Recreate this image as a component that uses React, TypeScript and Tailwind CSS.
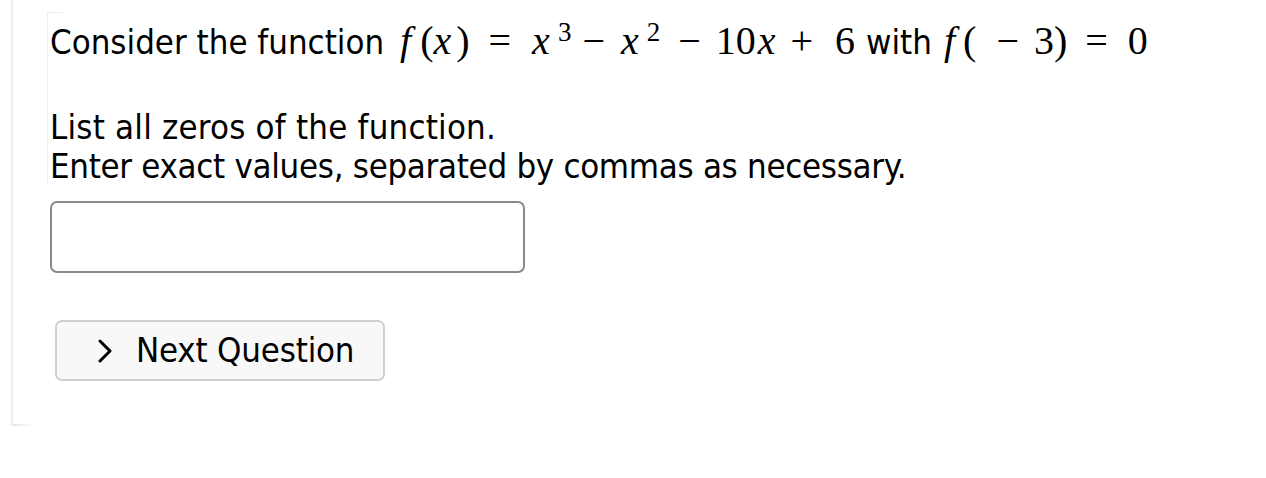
function Equation() {
  return (
    <span className="flex items-baseline font-['Liberation_Serif',serif] text-[40px]">
      <i>f</i>
      <span className="ml-[9px]">(</span>
      <i>x</i>
      <span className="ml-[5px]">)</span>
      <span className="ml-[19px]">=</span>
      <i className="ml-[21px]">x</i>
      <sup className="ml-[8px] text-[27px]">3</sup>
      <span className="ml-[11px]">−</span>
      <i className="ml-[16px]">x</i>
      <sup className="ml-[8px] text-[27px]">2</sup>
      <span className="ml-[18px]">−</span>
      <span className="ml-[15px]">10</span>
      <i className="ml-[2px]">x</i>
      <span className="ml-[15px]">+</span>
      <span className="ml-[22px]">6</span>
    </span>
  );
}

function Condition() {
  return (
    <span className="flex items-baseline font-['Liberation_Serif',serif] text-[40px]">
      <i>f</i>
      <span className="ml-[8px]">(</span>
      <span className="ml-[20px]">−</span>
      <span className="ml-[15px]">3</span>
      <span>)</span>
      <span className="ml-[18px]">=</span>
      <span className="ml-[20px]">0</span>
    </span>
  );
}

export default function App() {
  return (
    <div className="h-[478px] w-full bg-white pl-[11px] font-['DejaVu_Sans_Condensed','DejaVu_Sans',sans-serif] text-[34.5px] text-black">
      <div className="flex h-[426px] flex-col border-l-2 border-[#ededed]">
        <div className="ml-[34px] mt-[12px] flex flex-col border-l border-[#f0f0f0] pl-[2px]">
          <div className="-ml-[3px] h-px w-[24px] bg-gradient-to-r from-[#e8e8e8] to-white" />
          <div className="mt-[9px] flex items-baseline whitespace-nowrap leading-[38px]">
            <span className="w-[350px]">Consider the function</span>
            <Equation />
            <span className="ml-[11px]">with</span>
            <span className="ml-[12px]">
              <Condition />
            </span>
          </div>
          <div className="mt-[47px] flex flex-col leading-[38px]">
            <p className="tracking-[0.2px]">List all zeros of the function.</p>
            <p className="mt-px tracking-[-0.3px]">Enter exact values, separated by commas as necessary.</p>
          </div>
        </div>
        <input
          type="text"
          className="ml-[37px] mt-[16px] h-[72px] w-[475px] shrink-0 rounded-[7px] border-2 border-[#8a8a8a] bg-white px-2 outline-none"
        />
        <button
          type="button"
          className="ml-[42px] mt-[47px] flex h-[61px] w-[330px] shrink-0 items-center gap-[24px] rounded-[7px] border-2 border-[#d0d0d0] bg-[#f8f8f8] pl-[41px] text-[34.5px] text-black"
        >
          <svg width="14" height="24" viewBox="0 0 14 24" fill="none" stroke="currentColor" strokeWidth="3" strokeLinecap="round" strokeLinejoin="round">
            <polyline points="2,2 12,12 2,22" />
          </svg>
          <span className="leading-none tracking-[-0.2px]">Next Question</span>
        </button>
        <div className="mt-auto h-[2px] w-[22px] shrink-0 bg-gradient-to-r from-[#e6e6e6] to-white" />
      </div>
    </div>
  );
}
